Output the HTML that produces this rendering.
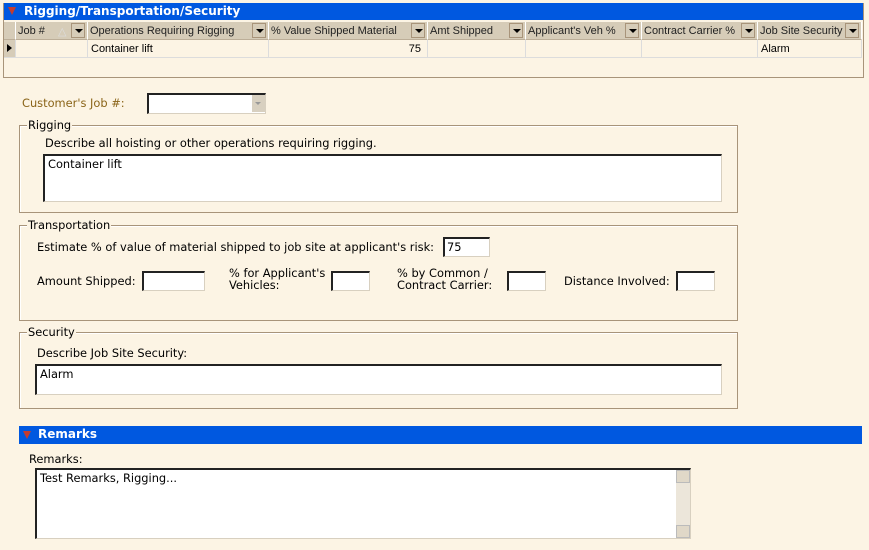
<!DOCTYPE html>
<html><head><style>
*{margin:0;padding:0;box-sizing:border-box}
body{width:869px;height:550px;background:#fcf4e4;position:relative;overflow:hidden;font-family:"DejaVu Sans",Verdana,sans-serif;font-size:11.4px;color:#000}
.a{position:absolute;white-space:nowrap}
.bar{background:#0058e0;color:#fff;font-weight:bold;font-family:"DejaVu Sans",sans-serif}
.tri{position:absolute;width:0;height:0;border-left:4px solid transparent;border-right:4px solid transparent;border-top:8px solid #c43c30}
.fs{position:absolute;border:1px solid #a8947a;box-shadow:inset 1px 1px 0 #fff}
.lg{position:absolute;background:#fcf4e4;padding:0 1px;top:-8px;font-size:11.4px}
.in{position:absolute;background:#fff;border:1px solid #d8d0c0;border-top:2px solid #222;border-left:2px solid #222}
.gh{position:absolute;top:22px;height:18px;background:#d6ccb8;border-right:1px solid #fff;border-bottom:1px solid #bcae98;font-family:"Liberation Sans",sans-serif;font-size:11px;padding:3px 2px;white-space:nowrap;overflow:hidden;color:#222}
.dd{position:absolute;right:2px;top:1px;width:14px;height:15px;border:1px solid #a8947a;background:#d6ccb8}
.dd:after{content:"";position:absolute;left:3px;top:5px;border-left:4px solid transparent;border-right:4px solid transparent;border-top:4px solid #000}
.gc{position:absolute;top:40px;height:18px;border-right:1px solid #dcdcdc;border-bottom:1px solid #dcdcdc;font-family:"Liberation Sans",sans-serif;font-size:11px;padding:3px 3px;white-space:nowrap}
</style></head><body>
<div class="a" style="left:3px;top:3px;width:861px;height:75px;border:1px solid #a8947a;background:#fcf4e4"></div>
<div class="a bar" style="left:4px;top:3px;width:859px;height:17px;font-size:12px;padding:0 0 0 20px;line-height:16px">Rigging/Transportation/Security</div>
<div class="tri" style="left:8px;top:7px"></div>
<div class="gh" style="left:4px;width:12px;padding:0"></div>
<div class="gh" style="left:16px;width:72px">Job #<span style="color:#ddd;position:absolute;left:42px">△</span><span class="dd"></span></div>
<div class="gh" style="left:88px;width:181px">Operations Requiring Rigging<span class="dd"></span></div>
<div class="gh" style="left:269px;width:159px">% Value Shipped Material<span class="dd"></span></div>
<div class="gh" style="left:428px;width:98px">Amt Shipped<span class="dd"></span></div>
<div class="gh" style="left:526px;width:116px">Applicant's Veh %<span class="dd"></span></div>
<div class="gh" style="left:642px;width:116px">Contract Carrier %<span class="dd"></span></div>
<div class="gh" style="left:758px;width:104px">Job Site Security<span class="dd"></span></div>
<div class="gc" style="left:4px;width:12px;background:#d6ccb8;padding:0"><div style="position:absolute;left:3px;top:4px;border-top:4px solid transparent;border-bottom:4px solid transparent;border-left:5px solid #000"></div></div>
<div class="gc" style="left:16px;width:72px"></div>
<div class="gc" style="left:88px;width:181px">Container lift</div>
<div class="gc" style="left:269px;width:159px;text-align:right;padding-right:6px">75</div>
<div class="gc" style="left:428px;width:98px"></div>
<div class="gc" style="left:526px;width:116px"></div>
<div class="gc" style="left:642px;width:116px"></div>
<div class="gc" style="left:758px;width:104px">Alarm</div>

<div class="a" style="left:22px;top:96px;color:#8a6418;font-size:11.4px">Customer's Job #:</div>
<div class="in" style="left:147px;top:93px;width:119px;height:21px"><div style="position:absolute;right:0;top:0;width:13px;height:17px;background:#d8d0c0"><div style="position:absolute;left:3px;top:7px;border-left:3px solid transparent;border-right:3px solid transparent;border-top:3px solid #999"></div></div></div>

<div class="fs" style="left:19px;top:125px;width:719px;height:88px"><span class="lg" style="left:7px">Rigging</span></div>
<div class="a" style="left:45px;top:136px">Describe all hoisting or other operations requiring rigging.</div>
<div class="in" style="left:43px;top:154px;width:679px;height:48px;padding:1px 3px">Container lift</div>

<div class="fs" style="left:19px;top:225px;width:719px;height:96px"><span class="lg" style="left:7px">Transportation</span></div>
<div class="a" style="left:37px;top:240px">Estimate % of value of material shipped to job site at applicant's risk:</div>
<div class="in" style="left:443px;top:237px;width:47px;height:20px;padding:1px 2px">75</div>
<div class="a" style="left:37px;top:274px">Amount Shipped:</div>
<div class="in" style="left:142px;top:271px;width:63px;height:20px"></div>
<div class="a" style="left:229px;top:267px;line-height:12px">% for Applicant's<br>Vehicles:</div>
<div class="in" style="left:331px;top:271px;width:39px;height:20px"></div>
<div class="a" style="left:397px;top:267px;line-height:12px">% by Common /<br>Contract Carrier:</div>
<div class="in" style="left:507px;top:271px;width:39px;height:20px"></div>
<div class="a" style="left:564px;top:274px">Distance Involved:</div>
<div class="in" style="left:676px;top:271px;width:39px;height:20px"></div>

<div class="fs" style="left:19px;top:332px;width:719px;height:77px"><span class="lg" style="left:7px">Security</span></div>
<div class="a" style="left:37px;top:346px">Describe Job Site Security:</div>
<div class="in" style="left:35px;top:364px;width:687px;height:31px;padding:1px 3px">Alarm</div>

<div class="a bar" style="left:19px;top:426px;width:843px;height:18px;font-size:12px;padding-left:19px;line-height:17px">Remarks</div>
<div class="tri" style="left:23px;top:431px"></div>
<div class="a" style="left:29px;top:452px">Remarks:</div>
<div class="in" style="left:35px;top:468px;width:656px;height:71px;padding:1px 3px">Test Remarks, Rigging...
<div style="position:absolute;right:0;top:0;width:14px;height:68px;background:#ece6da"><div style="position:absolute;top:0;left:0;width:14px;height:13px;background:#e0d8c8;border:1px solid #bbb"></div><div style="position:absolute;bottom:0;left:0;width:14px;height:13px;background:#e0d8c8;border:1px solid #bbb"></div></div></div>
</body></html>
